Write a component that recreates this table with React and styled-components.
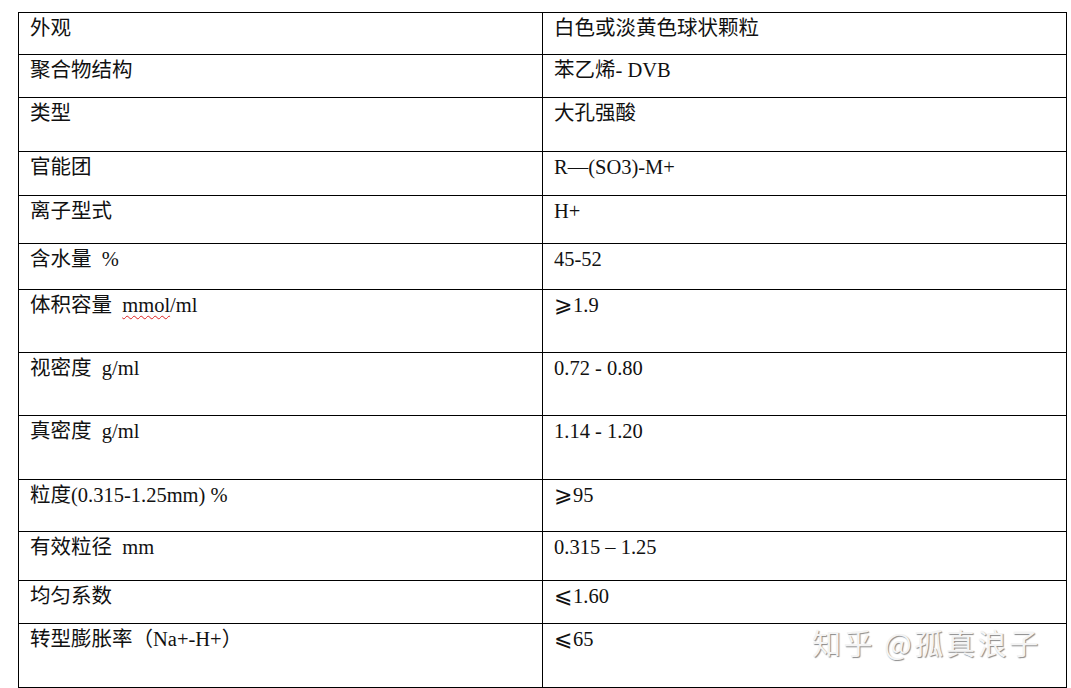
import React from 'react';
import styled, { createGlobalStyle } from 'styled-components';

const GlobalStyle = createGlobalStyle`
  html, body {
    margin: 0;
    padding: 0;
    background: #fff;
  }
`;

const Page = styled.div`
  position: relative;
  width: 1071px;
  height: 688px;
  padding: 12px 0 0 18px;
  box-sizing: border-box;
  font-family: "Liberation Serif", "Noto Sans CJK SC", serif;
  color: #111;
  overflow: hidden;
`;

const Table = styled.table`
  border-collapse: collapse;
  table-layout: fixed;
  width: 1049px;
`;

const Row = styled.tr`
  height: ${(p) => p.$h}px;
`;

const Cell = styled.td`
  border: 1px solid #000;
  vertical-align: top;
  padding: 3px 0 0 11px;
  font-size: 20.5px;
  line-height: 24px;
  white-space: pre;
  width: ${(p) => p.$w || 'auto'};
  box-sizing: border-box;
`;

const Squiggle = styled.span`
  text-decoration: underline wavy #d22;
  text-decoration-thickness: 1px;
  text-underline-offset: 3px;
`;

const MathSign = styled.span`
  font-family: "DejaVu Sans", sans-serif;
  font-size: 22px;
  font-weight: 300;
  margin-right: 1px;
`;

const Watermark = styled.div`
  position: absolute;
  left: 812px;
  top: 621px;
  font-family: "Noto Sans CJK SC", sans-serif;
  font-size: 29px;
  letter-spacing: 2.6px;
  color: #f4f4f4;
  text-shadow: 1px 1px 1px #8a8a8a, -1px -1px 0 #fff;
  white-space: nowrap;
`;

const rows = [
  { h: 42, k: '外观', v: '白色或淡黄色球状颗粒' },
  { h: 43, k: '聚合物结构', v: '苯乙烯- DVB' },
  { h: 54, k: '类型', v: '大孔强酸' },
  { h: 44, k: '官能团', v: 'R—(SO3)-M+' },
  { h: 48, k: '离子型式', v: 'H+' },
  { h: 46, k: '含水量  %', v: '45-52' },
  { h: 63, k: <>体积容量  <Squiggle>mmol</Squiggle>/ml</>, v: <><MathSign>⩾</MathSign>1.9</> },
  { h: 63, k: '视密度  g/ml', v: '0.72 - 0.80' },
  { h: 64, k: '真密度  g/ml', v: '1.14 - 1.20' },
  { h: 52, k: '粒度(0.315-1.25mm) %', v: <><MathSign>⩾</MathSign>95</> },
  { h: 49, k: '有效粒径  mm', v: '0.315 – 1.25' },
  { h: 43, k: '均匀系数', v: <><MathSign>⩽</MathSign>1.60</> },
  { h: 64, k: '转型膨胀率（Na+-H+）', v: <><MathSign>⩽</MathSign>65</> },
];

export default function App() {
  return (
    <Page>
      <GlobalStyle />
      <Table>
        <tbody>
          {rows.map((r, i) => (
            <Row key={i} $h={r.h}>
              <Cell $w="524px">{r.k}</Cell>
              <Cell>{r.v}</Cell>
            </Row>
          ))}
        </tbody>
      </Table>
      <Watermark>知乎 @孤真浪子</Watermark>
    </Page>
  );
}
